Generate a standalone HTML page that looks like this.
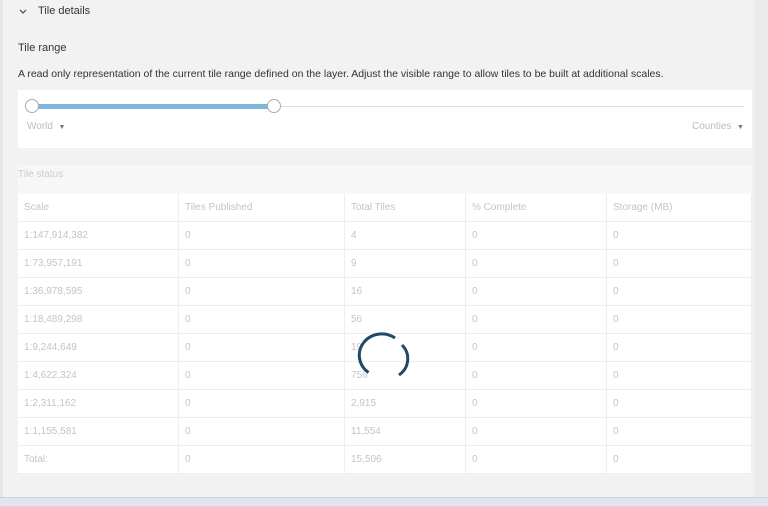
<!DOCTYPE html>
<html><head><style>
body{margin:0;width:768px;height:505px;overflow:hidden;background:#f2f2f2;font-family:"Liberation Sans",sans-serif;position:relative}
.abs{position:absolute}
.t{color:#333;font-size:11px}
table{border-collapse:collapse;position:absolute;left:18px;top:194px;width:734px;background:#fff}
td{height:27px;border:1px solid #eee;border-width:0 1px 1px 0;font-size:10px;color:#c4c4c4;padding:0 0 0 6px;vertical-align:middle}
</style></head><body>
<div class="abs" style="right:0;top:0;width:14px;height:497px;background:#ebebeb"></div>
<div class="abs" style="left:0;top:0;width:3px;height:497px;background:#e6e6e6"></div>
<svg class="abs" style="left:19px;top:9px" width="8" height="6" viewBox="0 0 8 6"><path d="M1 1 L4 4 L7 1" fill="none" stroke="#555" stroke-width="1.3"/></svg>
<div class="abs t" style="left:38px;top:5px;font-size:11px;color:#333">Tile details</div>
<div class="abs t" style="left:18px;top:42px">Tile range</div>
<div class="abs t" style="left:18px;top:68px;font-size:10.5px">A read only representation of the current tile range defined on the layer. Adjust the visible range to allow tiles to be built at additional scales.</div>
<div class="abs" style="left:18px;top:90px;width:734px;height:58px;background:#fff"></div>
<div class="abs" style="left:32px;top:106px;width:712px;height:1px;background:#e0e0e0"></div>
<div class="abs" style="left:32px;top:104px;width:242px;height:5px;background:#7db6d8"></div>
<div class="abs" style="left:25px;top:99px;width:12px;height:12px;border:1px solid #aab;border-radius:50%;background:#fff"></div>
<div class="abs" style="left:267px;top:99px;width:12px;height:12px;border:1px solid #aab;border-radius:50%;background:#fff"></div>
<div class="abs" style="left:27px;top:121px;font-size:10px;color:#bbb">World &nbsp;<span style="font-size:7px;color:#777">▼</span></div>
<div class="abs" style="left:692px;top:121px;font-size:10px;color:#bbb">Counties &nbsp;<span style="font-size:7px;color:#777">▼</span></div>
<div class="abs" style="left:18px;top:165px;width:734px;height:310px;background:#f7f7f7"></div>
<div class="abs" style="left:18px;top:169px;font-size:10px;color:#ccc">Tile status</div>
<table>
<tr><td style="width:154px">Scale</td><td style="width:159px">Tiles Published</td><td style="width:114px">Total Tiles</td><td style="width:134px">% Complete</td><td>Storage (MB)</td></tr>
<tr><td>1:147,914,382</td><td>0</td><td>4</td><td>0</td><td>0</td></tr>
<tr><td>1:73,957,191</td><td>0</td><td>9</td><td>0</td><td>0</td></tr>
<tr><td>1:36,978,595</td><td>0</td><td>16</td><td>0</td><td>0</td></tr>
<tr><td>1:18,489,298</td><td>0</td><td>56</td><td>0</td><td>0</td></tr>
<tr><td>1:9,244,649</td><td>0</td><td>19</td><td>0</td><td>0</td></tr>
<tr><td>1:4,622,324</td><td>0</td><td>756</td><td>0</td><td>0</td></tr>
<tr><td>1:2,311,162</td><td>0</td><td>2,915</td><td>0</td><td>0</td></tr>
<tr><td>1:1,155,581</td><td>0</td><td>11,554</td><td>0</td><td>0</td></tr>
<tr><td>Total:</td><td>0</td><td>15,506</td><td>0</td><td>0</td></tr>
</table>
<svg class="abs" style="left:355px;top:327px;overflow:visible" width="60" height="60" viewBox="0 0 60 60">
<path d="M13.5 45.5 A21 20 0 0 1 40 11" fill="none" stroke="#1f4a63" stroke-width="3"/>
<path d="M47 18 A21 20 0 0 1 44 48" fill="none" stroke="#1f4a63" stroke-width="3"/>
</svg>
<div class="abs" style="left:0;top:497px;width:768px;height:8px;background:#dfe6f2;border-top:1px solid #c8d4e8"></div>
</body></html>
